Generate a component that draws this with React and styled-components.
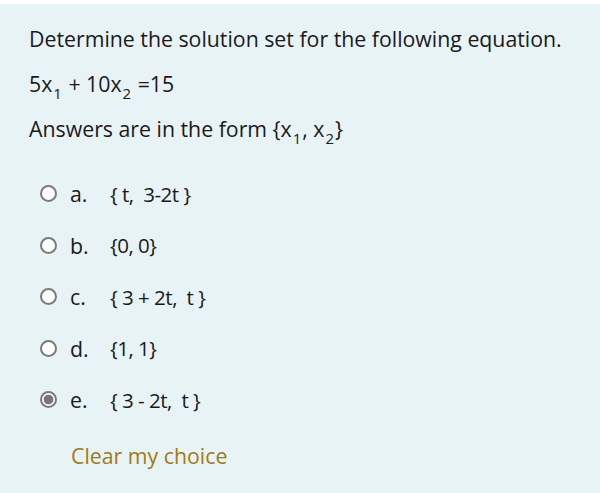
import React from "react";
import styled, { createGlobalStyle } from "styled-components";

const Global = createGlobalStyle`
  html, body { margin: 0; padding: 0; background: #ffffff; }
  body { font-family: "Open Sans", "Noto Sans", sans-serif; }
`;

const Panel = styled.div`
  margin-top: 4px;
  height: 489px;
  box-sizing: border-box;
  background: #e7f3f5;
  padding: 12px 0 0 29px;
  color: #1a1a1a;
  font-size: 21.3px;
`;

const Para = styled.p`
  margin: 0;
  line-height: 45px;
  white-space: nowrap;
`;

const Sub = styled.sub`
  font-size: 0.7em;
  vertical-align: -0.45em;
  line-height: 0;
  margin: 0 1px;
`;

const Options = styled.div`
  display: flex;
  flex-direction: column;
  margin-top: 17px;
  padding-left: 11px;
`;

const Option = styled.label`
  display: flex;
  align-items: center;
  height: 51.5px;
  white-space: pre;
`;

const Radio = styled.span`
  width: 17px;
  height: 17px;
  box-sizing: border-box;
  border-radius: 50%;
  border: 2px solid #7a7a7a;
  background: ${(p) => (p.$checked ? "radial-gradient(circle, #777 0 4.6px, #fff 5.2px)" : "#fff")};
  margin-right: 13px;
  flex: none;
`;

const Letter = styled.span`
  width: 40px;
  flex: none;
`;

const Answer = styled.span`
  font-size: 20.5px;
  letter-spacing: -0.5px;
`;

const Clear = styled.a`
  display: block;
  margin: 15px 0 0 42px;
  color: #a17b12;
  text-decoration: none;
`;

const options = [
  ["a.", "{ t,  3-2t }", false],
  ["b.", "{0, 0}", false],
  ["c.", "{ 3 + 2t,  t }", false],
  ["d.", "{1, 1}", false],
  ["e.", "{ 3 - 2t,  t }", true],
];

export default function App() {
  return (
    <>
      <Global />
      <Panel>
        <Para>Determine the solution set for the following equation.</Para>
        <Para>
          5x<Sub>1</Sub> + 10x<Sub>2</Sub> =15
        </Para>
        <Para>
          Answers are in the form {"{"}x<Sub>1</Sub>, x<Sub>2</Sub>{"}"}
        </Para>
        <Options>
          {options.map(([l, t, c]) => (
            <Option key={l}>
              <Radio $checked={c} />
              <Letter>{l}</Letter>
              <Answer>{t}</Answer>
            </Option>
          ))}
        </Options>
        <Clear href="#">Clear my choice</Clear>
      </Panel>
    </>
  );
}
